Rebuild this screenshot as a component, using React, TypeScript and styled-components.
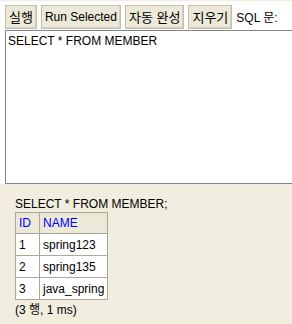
import React from 'react';
import styled, { createGlobalStyle } from 'styled-components';

const GlobalStyle = createGlobalStyle`
    html, body {
        margin: 0;
        padding: 0;
        background: #ffffff;
        overflow: hidden;
    }
    body {
        font-family: Arial, "Liberation Sans", "Noto Sans CJK KR", sans-serif;
        font-size: 12px;
        color: #000;
    }
`;

const Page = styled.div`
    width: 292px;
    height: 324px;
    display: flex;
    flex-direction: column;
    border-top: 1px solid #f1eee0;
    box-sizing: border-box;
`;

const Toolbar = styled.div`
    display: flex;
    align-items: center;
    gap: 4px;
    padding: 3px 0 0 5px;
    box-sizing: border-box;
    height: 28px;
`;

const ToolButton = styled.button<{ $kr?: boolean }>`
    height: 24px;
    padding: 0 3px;
    background: #ece9d8;
    border: 1px solid;
    border-color: #fff #aca899 #aca899 #fff;
    outline: 1px solid #c3c0b0;
    outline-offset: -1px;
    box-shadow: inset -1px -1px 0 #d6d2c2;
    font-family: Arial, "Liberation Sans", "Noto Sans CJK KR", sans-serif;
    font-size: ${({ $kr }) => ($kr ? '13px' : '12px')};
    color: #000;
    white-space: nowrap;
`;

const Label = styled.span`
    font-size: 12px;
    white-space: nowrap;
`;

const Editor = styled.textarea`
    display: block;
    margin: 1px 0 0 5px;
    width: 300px;
    height: 154px;
    box-sizing: border-box;
    border: 1px solid #838383;
    border-right: none;
    padding: 3px 2px;
    resize: none;
    font-family: Arial, "Liberation Sans", sans-serif;
    font-size: 12px;
    line-height: 14px;
    color: #000;
    background: #fff;
`;

const Result = styled.div`
    flex: 1;
    background: #f1eddf;
    padding: 13px 15px 0 15px;
`;

const Query = styled.div`
    font-size: 12px;
    line-height: 14px;
    margin-bottom: 1px;
`;

const Grid = styled.table`
    border-collapse: collapse;
    background: #fff;
`;

const HeadCell = styled.th`
    background: #ece9d8;
    color: #0000ff;
    font-weight: normal;
    text-align: left;
    border: 1px solid #aca899;
    padding: 0 3px;
    height: 20px;
    font-size: 12px;
`;

const Cell = styled.td<{ $narrow?: boolean }>`
    border: 1px solid #aca899;
    padding: 0 3px;
    height: 21px;
    font-size: 12px;
    width: ${({ $narrow }) => ($narrow ? '17px' : 'auto')};
`;

const Footer = styled.div`
    font-size: 12px;
    line-height: 14px;
    margin-top: 3px;
`;

const rows = [
    { id: 1, name: 'spring123' },
    { id: 2, name: 'spring135' },
    { id: 3, name: 'java_spring' },
];

export default function App(): JSX.Element {
    return (
        <>
            <GlobalStyle />
            <Page>
                <Toolbar>
                    <ToolButton $kr>실행</ToolButton>
                    <ToolButton>Run Selected</ToolButton>
                    <ToolButton $kr>자동 완성</ToolButton>
                    <ToolButton $kr>지우기</ToolButton>
                    <Label>SQL 문:</Label>
                </Toolbar>
                <Editor defaultValue="SELECT * FROM MEMBER" spellCheck={false} />
                <Result>
                    <Query>SELECT * FROM MEMBER;</Query>
                    <Grid>
                        <thead>
                            <tr>
                                <HeadCell>ID</HeadCell>
                                <HeadCell>NAME</HeadCell>
                            </tr>
                        </thead>
                        <tbody>
                            {rows.map((r) => (
                                <tr key={r.id}>
                                    <Cell $narrow>{r.id}</Cell>
                                    <Cell>{r.name}</Cell>
                                </tr>
                            ))}
                        </tbody>
                    </Grid>
                    <Footer>(3 행, 1 ms)</Footer>
                </Result>
            </Page>
        </>
    );
}
